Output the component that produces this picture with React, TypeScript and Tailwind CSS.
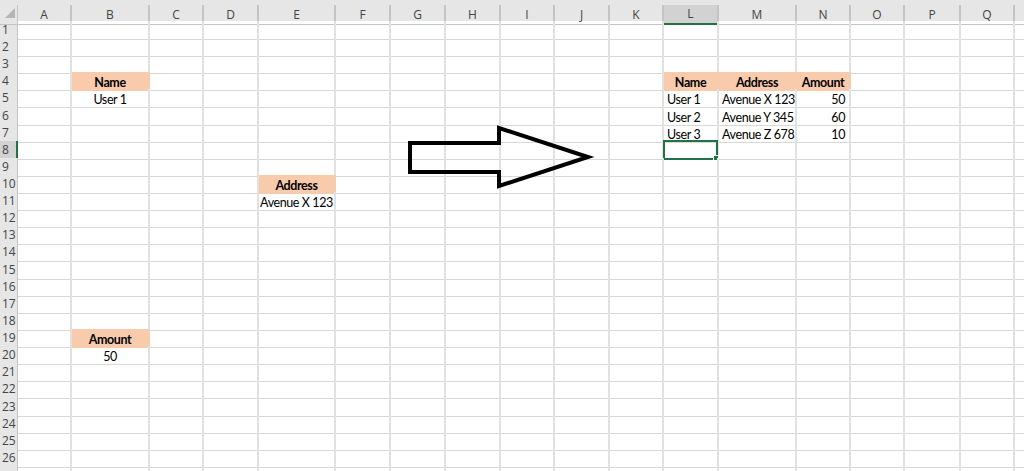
import React from 'react';

type Cell = { text: string; bold?: boolean; align?: 'left' | 'center' | 'right'; fill?: boolean };

const columns = ['A', 'B', 'C', 'D', 'E', 'F', 'G', 'H', 'I', 'J', 'K', 'L', 'M', 'N', 'O', 'P', 'Q', 'R'];

const cells: Record<string, Cell> = {
  B4: { text: 'Name', bold: true, fill: true },
  B5: { text: 'User 1' },
  E10: { text: 'Address', bold: true, fill: true },
  E11: { text: 'Avenue X 123' },
  B19: { text: 'Amount', bold: true, fill: true },
  B20: { text: '50' },
  L4: { text: 'Name', bold: true, fill: true },
  M4: { text: 'Address', bold: true, fill: true },
  N4: { text: 'Amount', bold: true, fill: true },
  L5: { text: 'User 1', align: 'left' },
  M5: { text: 'Avenue X 123', align: 'left' },
  N5: { text: '50', align: 'right' },
  L6: { text: 'User 2', align: 'left' },
  M6: { text: 'Avenue Y 345', align: 'left' },
  N6: { text: '60', align: 'right' },
  L7: { text: 'User 3', align: 'left' },
  M7: { text: 'Avenue Z 678', align: 'left' },
  N7: { text: '10', align: 'right' },
};

const tallRows = [5, 14, 22];
const rows = Array.from({ length: 27 }, (_, i) => i + 1);

const GridCell = ({ id, row }: { id: string; row: number }) => {
  const cell = cells[`${id}${row}`];
  const selected = id === 'L' && row === 8;
  const align =
    cell?.align === 'left' ? 'justify-start pl-[3px]' : cell?.align === 'right' ? 'justify-end pr-[4px]' : 'justify-center';
  return (
    <div
      className={`relative flex items-center border-r-2 border-b ${
        cell?.fill ? 'bg-[#f8cbad] border-[#f8cbad]' : 'border-r-[#e1e1e1] border-b-[#d8d8d8]'
      } ${align}`}
    >
      {cell && (
        <span
          className={`relative top-[2px] whitespace-nowrap text-[12.5px] leading-none tracking-[-0.4px] text-black ${
            cell.bold ? 'font-bold' : ''
          }`}
        >
          {cell.text}
        </span>
      )}
      {selected && (
        <div className="absolute -left-[1px] -top-[1px] -right-[1px] -bottom-[1px] border-2 border-[#217346]">
          <div className="absolute -right-[3px] -bottom-[3px] h-[6px] w-[6px] bg-[#217346] border border-white" />
        </div>
      )}
    </div>
  );
};

export default function App() {
  return (
    <div className="relative h-[471px] w-[1024px] overflow-hidden bg-white font-['Lato',sans-serif]">
      <div className="h-[21px] bg-[#e6e6e6] pt-[5px]">
        <div className="grid h-[16px] grid-cols-[18px_54px_78px_54px_55px_77px_55px_55px_55px_54px_55px_54px_55px_78px_54px_54px_56px_54px_54px] font-['Open_Sans',sans-serif] text-[12px] text-[#444]">
          <div className="relative border-r border-b border-[#c4c4c4]">
            <svg className="absolute left-0 top-0" width="17" height="15" viewBox="0 0 17 15">
              <polygon points="5,13 15,13 15,3" fill="#b5b5b5" />
            </svg>
          </div>
          {columns.map((c) => (
            <div
              key={c}
              className={`flex items-center justify-center border-r-2 ${
                c === 'L'
                  ? 'bg-[#d2d2d2] border-r-[#c4c4c4] border-b-2 border-b-[#217346]'
                  : 'border-r-[#c4c4c4] border-b border-b-[#c4c4c4]'
              }`}
            >
              {c === 'R' ? '' : c}
            </div>
          ))}
        </div>
      </div>
      {rows.map((r) => (
        <div
          key={r}
          className={`grid grid-cols-[18px_54px_78px_54px_55px_77px_55px_55px_55px_54px_55px_54px_55px_78px_54px_54px_56px_54px_54px] ${
            tallRows.includes(r) ? 'h-[18px]' : 'h-[17px]'
          }`}
        >
          <div
            className={`flex items-center pl-[2px] font-['Open_Sans',sans-serif] text-[12px] text-[#444] border-b ${
              r === 8
                ? 'bg-[#d2d2d2] border-r-2 border-r-[#217346] border-b-[#c4c4c4]'
                : 'bg-[#e6e6e6] border-r border-r-[#c4c4c4] border-b-[#cfcfcf]'
            }`}
          >
            {r === 27 ? '' : r}
          </div>
          {columns.map((c) => (
            <GridCell key={c} id={c} row={r} />
          ))}
        </div>
      ))}
      <svg className="pointer-events-none absolute left-0 top-0" width="1024" height="471" viewBox="0 0 1024 471">
        <polygon
          points="410,143 499,143 499,128 588,157 499,186 499,172 410,172"
          fill="none"
          stroke="#000"
          strokeWidth="4"
        />
      </svg>
    </div>
  );
}
